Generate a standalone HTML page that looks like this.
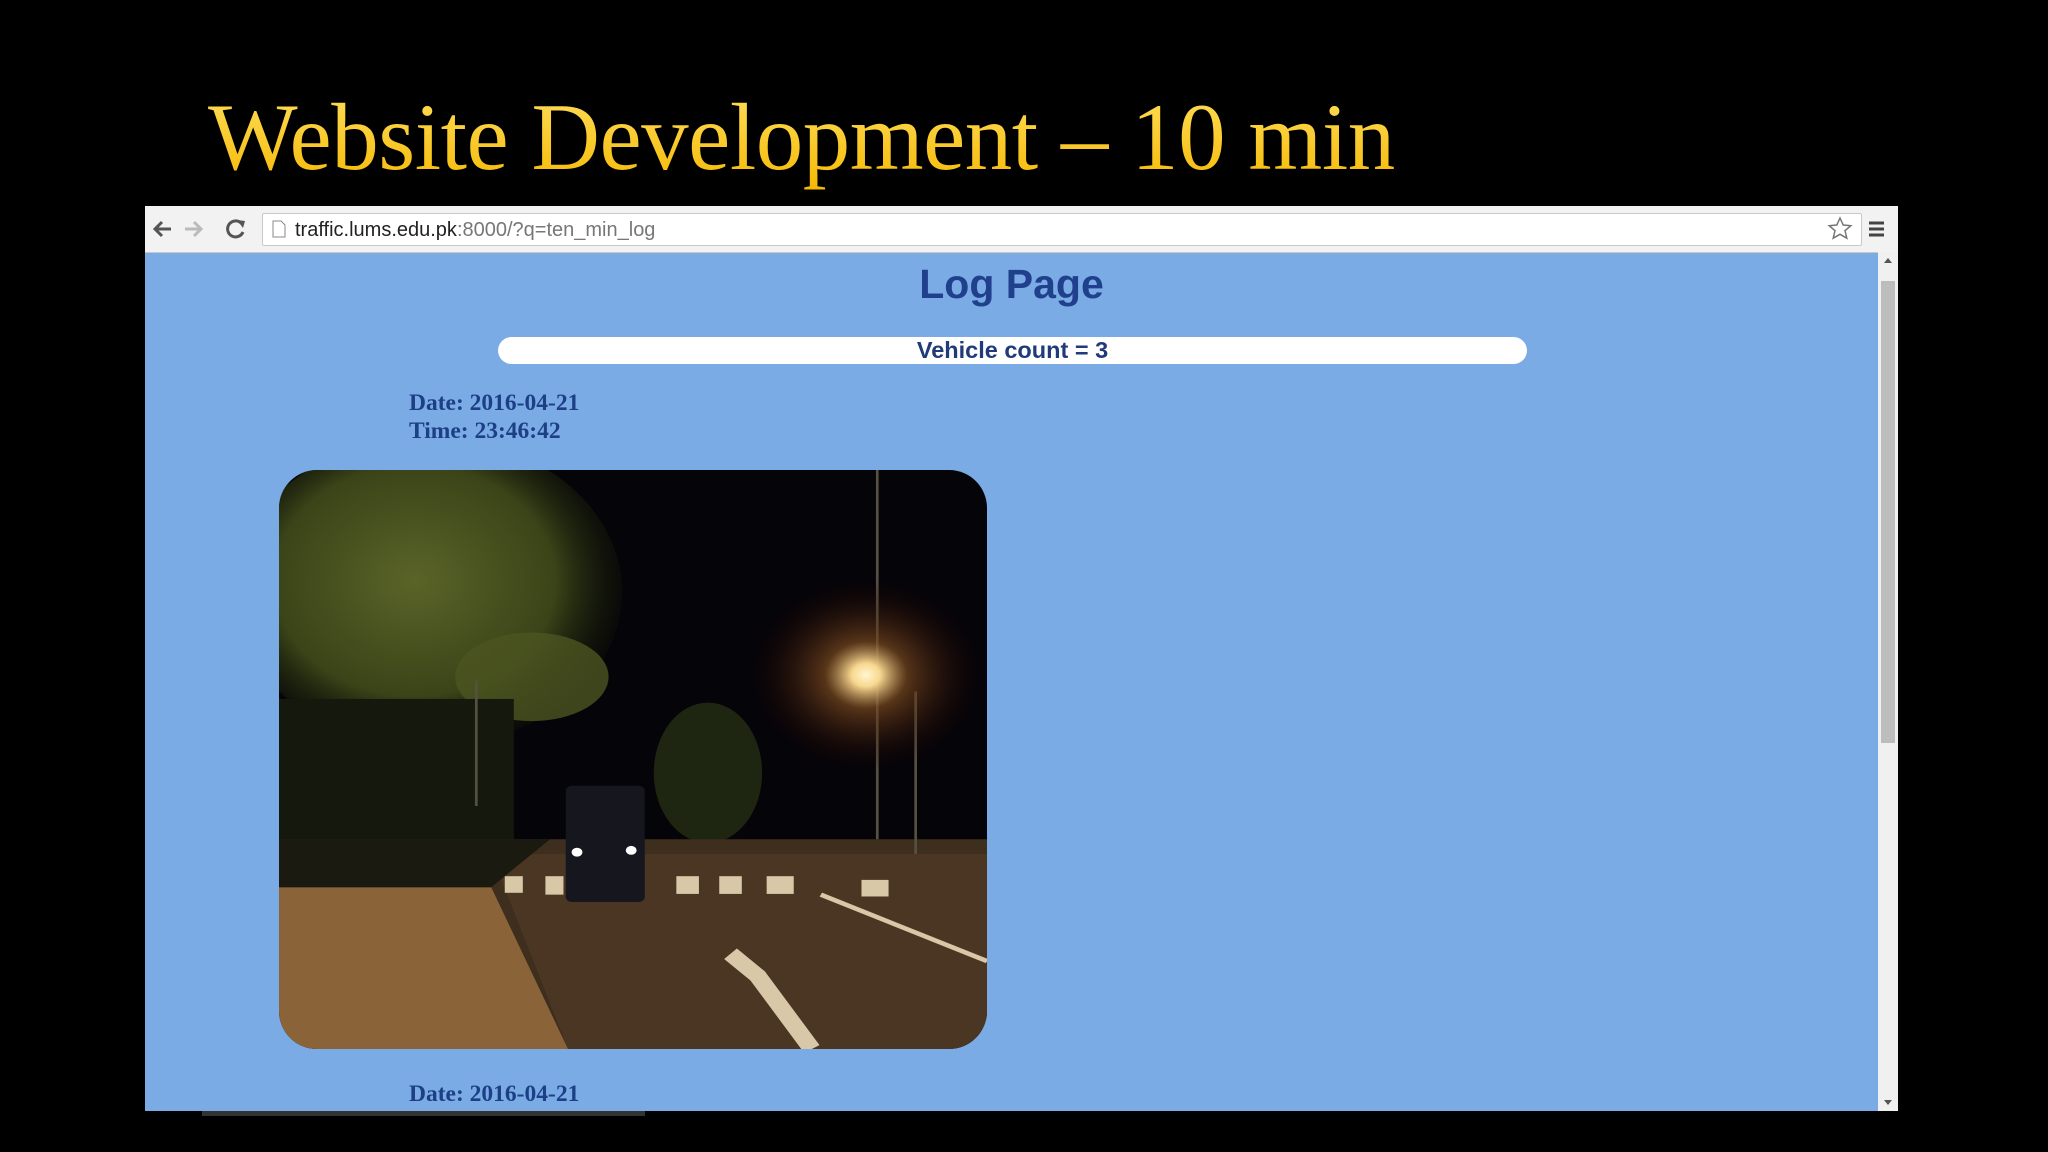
<!DOCTYPE html>
<html><head><meta charset="utf-8"><style>
html,body{margin:0;padding:0;background:#000;width:2048px;height:1152px;overflow:hidden;position:relative;font-family:"Liberation Sans",sans-serif}
.title{position:absolute;left:208px;top:82px;font-family:"Liberation Serif",serif;font-size:95px;color:#f7c000;white-space:nowrap;letter-spacing:-0.5px;background:linear-gradient(#ffe060,#f5b800);-webkit-background-clip:text;background-clip:text;-webkit-text-fill-color:transparent}
.browser{position:absolute;left:145px;top:206px;width:1753px;height:905px;background:#7aabe5}
.toolbar{position:absolute;left:0;top:0;width:1753px;height:46px;background:#f2f2f2;border-bottom:1px solid #c8c8c8}
.url{position:absolute;left:117px;top:7px;width:1598px;height:31px;background:#fff;border:1px solid #c9c9c9;border-radius:2px}
.url span{position:absolute;left:32px;top:5px;font-size:20px;color:#222}
.url span i{font-style:normal;color:#777}
.sb{position:absolute;left:1733px;top:46px;width:20px;height:859px;background:#f0f0f0}
.thumb{position:absolute;left:3px;top:29px;width:14px;height:462px;background:#bdbdbd}
.h1{position:absolute;left:0;width:1733px;top:55px;text-align:center;font-size:41px;font-weight:bold;color:#203f8c}
.pill{position:absolute;left:353px;top:131px;width:1029px;height:27px;background:#fff;border-radius:14px;text-align:center;font-size:23.5px;font-weight:bold;color:#213a7a;line-height:27px}
.dt{position:absolute;left:264px;font-family:"Liberation Serif",serif;font-weight:bold;font-size:23.5px;color:#1d3f86}
.img{position:absolute;left:134px;top:264px;width:708px;height:579px;border-radius:38px;overflow:hidden}
</style></head><body>
<div class="title">Website Development – 10 min</div>
<div class="browser">
 <div class="toolbar">
  <svg width="110" height="46" style="position:absolute;left:0;top:0">
   <path d="M26 23H10M17 16l-7 7 7 7" stroke="#555" stroke-width="3" fill="none"/>
   <path d="M40 23h16M49 16l7 7-7 7" stroke="#bbb" stroke-width="3" fill="none"/>
   <path d="M96 17a8 8 0 1 0 2 9" stroke="#555" stroke-width="3" fill="none"/><path d="M92 14l8 1-2 7z" fill="#555"/>
  </svg>
  <div class="url"><svg width="14" height="18" style="position:absolute;left:9px;top:6px"><path d="M1 1h8l4 4v12H1z" fill="none" stroke="#888"/></svg><span>traffic.lums.edu.pk<i>:8000/?q=ten_min_log</i></span>
   <svg width="26" height="26" style="position:absolute;right:8px;top:2px"><path d="M13 2l3.2 7 7.6.7-5.8 5 1.8 7.5L13 18.3 6.2 22.2 8 14.7l-5.8-5 7.6-.7z" fill="none" stroke="#777" stroke-width="1.5"/></svg>
  </div>
  <svg width="20" height="20" style="position:absolute;left:1722px;top:13px"><path d="M2 4h15M2 10h15M2 16h15" stroke="#444" stroke-width="3"/></svg>
 </div>
 <div class="sb"><div class="thumb"></div>
  <svg width="20" height="859" style="position:absolute;left:0;top:0"><path d="M6 11h8l-4-5z" fill="#555"/><path d="M6 848h8l-4 5z" fill="#555"/></svg></div>
 <div class="h1">Log Page</div>
 <div class="pill">Vehicle count = 3</div>
 <div class="dt" style="top:184px">Date: 2016-04-21</div>
 <div class="dt" style="top:212px">Time: 23:46:42</div>
 <div class="img"><svg width="708" height="579" viewBox="0 0 1568 1568" preserveAspectRatio="none">
  <defs><radialGradient id="g" cx="1300" cy="555" r="260" gradientUnits="userSpaceOnUse"><stop offset="0" stop-color="#fff6d0"/><stop offset=".12" stop-color="#f8d890"/><stop offset=".35" stop-color="#7a4a20" stop-opacity=".7"/><stop offset="1" stop-color="#200" stop-opacity="0"/></radialGradient>
  <radialGradient id="t" cx="300" cy="300" r="520" gradientUnits="userSpaceOnUse"><stop offset="0" stop-color="#5a6428"/><stop offset=".6" stop-color="#3a4418"/><stop offset="1" stop-color="#0a0c04" stop-opacity="0"/></radialGradient></defs>
  <rect width="1568" height="1568" fill="#050408"/>
  <ellipse cx="330" cy="330" rx="430" ry="420" fill="url(#t)"/>
  <ellipse cx="560" cy="560" rx="170" ry="120" fill="#4c5520" opacity=".8"/>
  <ellipse cx="950" cy="820" rx="120" ry="190" fill="#1e2612"/>
  <rect x="0" y="620" width="520" height="420" fill="#15180c"/>
  <polygon points="0,1000 1568,1000 1568,1568 0,1568" fill="#3e2e1e"/>
  <polygon points="470,1040 1568,1040 1568,1568 640,1568" fill="#4a3622"/>
  <polygon points="0,1130 470,1130 640,1568 0,1568" fill="#8a6438"/>
  <polygon points="0,1000 600,1000 470,1130 0,1130" fill="#1a1a10"/>
  <g fill="#d8c8a8"><rect x="880" y="1100" width="50" height="48"/><rect x="975" y="1100" width="50" height="48"/><rect x="1080" y="1100" width="60" height="48"/><rect x="1290" y="1110" width="60" height="45"/><rect x="500" y="1100" width="40" height="45"/><rect x="590" y="1100" width="40" height="50"/></g>
  <path d="M1200 1150l368 180" stroke="#d8c8a8" stroke-width="12"/>
  <path d="M1000 1310l60 60 120 198" stroke="#d8c8a8" stroke-width="40" fill="none"/>
  <path d="M1325 0v1000M1410 600v440M437 570v340" stroke="#555040" stroke-width="6"/>
  <rect x="635" y="855" width="175" height="315" rx="14" fill="#16161e"/>
  <circle cx="660" cy="1035" r="12" fill="#fff"/><circle cx="780" cy="1030" r="12" fill="#fff"/>
  <circle cx="1300" cy="555" r="260" fill="url(#g)"/>
 </svg></div>
 <div class="dt" style="top:875px">Date: 2016-04-21</div>
</div>
<div style="position:absolute;left:202px;top:1111px;width:443px;height:5px;background:#333"></div>
</body></html>
